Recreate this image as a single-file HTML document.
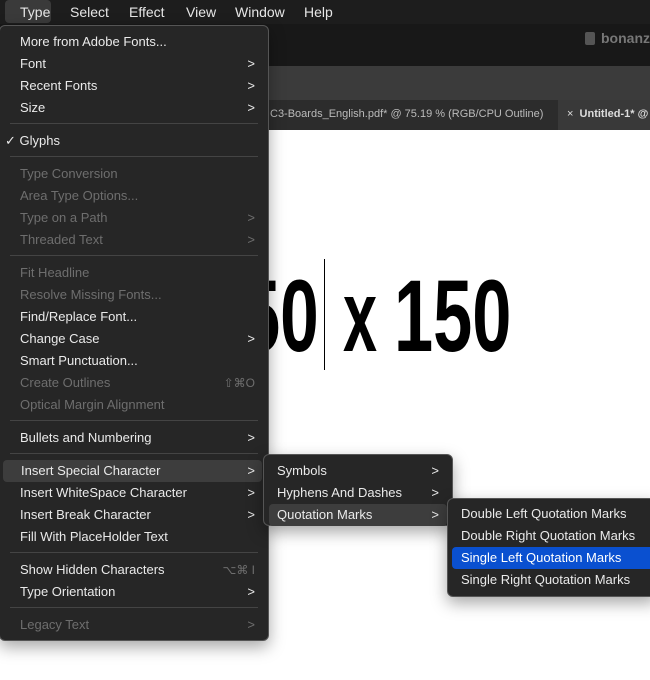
<!DOCTYPE html>
<html><head><style>
*{margin:0;padding:0;box-sizing:border-box}
body{width:650px;height:680px;overflow:hidden;background:#fff;font-family:"Liberation Sans",sans-serif;position:relative}
.abs{position:absolute}
.mb{left:0;top:0;width:650px;height:24px;background:#1d1d1d;color:#e6e6e6;font-size:14px}
.mb span{position:absolute;top:4px}
.menu{background:#262626;border:1px solid #555;border-radius:6px;box-shadow:0 6px 16px rgba(0,0,0,.35);color:#eaeaea;font-size:13px}
.it{position:absolute;left:0;right:0;height:22px;line-height:22px;padding-left:20px}
.dis{color:#6e6e6e}
.ar{position:absolute;right:13px;top:0;font-size:13px}
.sep{position:absolute;left:10px;right:10px;height:1px;background:#444}
.hl{background:#3d3d3d;border-radius:4px}
.big{position:absolute;top:265px;font-size:102px;line-height:1;font-weight:bold;color:#000;transform-origin:0 0;white-space:nowrap}
</style></head><body>
<div class="abs mb">
<div class="abs" style="left:5px;top:0;width:46px;height:23px;background:#3a3a3a;border-radius:4px"></div>
<span style="left:20px">Type</span><span style="left:70px">Select</span><span style="left:129px">Effect</span><span style="left:186px">View</span><span style="left:235px">Window</span><span style="left:304px">Help</span>
</div>
<div class="abs" style="left:0;top:24px;width:650px;height:42px;background:#181818"></div>
<div class="abs" style="left:585px;top:32px;width:10px;height:13px;background:#555;border-radius:2px"></div>
<div class="abs" style="left:601px;top:30px;color:#777;font-size:14px;font-weight:bold">bonanza</div>
<div class="abs" style="left:0;top:66px;width:650px;height:34px;background:#3b3b3b"></div>
<div class="abs" style="left:0;top:100px;width:650px;height:30px;background:#2c2c2c"></div>
<div class="abs" style="left:558px;top:100px;width:92px;height:30px;background:#393939"></div>
<div class="abs" style="left:270px;top:108px;color:#bbb;font-size:11px">C3-Boards_English.pdf* @ 75.19 % (RGB/CPU Outline)</div>
<div class="abs" style="left:567px;top:108px;color:#ddd;font-size:11px">×&nbsp;&nbsp;<b>Untitled-1* @</b></div>
<div class="abs" style="left:0;top:130px;width:650px;height:550px;background:#fff"></div>
<div class="big" style="left:203px;transform:scaleX(.68)">150</div>
<div class="big" style="left:343px;transform:scaleX(.6)">x</div>
<div class="big" style="left:394px;transform:scaleX(.69)">150</div>
<div class="abs" style="left:324px;top:259px;width:1px;height:111px;background:#000"></div>

<div class="abs menu" style="left:-1px;top:25px;width:270px;height:616px">
<div class="it" style="top:5px">More from Adobe Fonts...</div>
<div class="it" style="top:27px">Font<span class="ar">&gt;</span></div>
<div class="it" style="top:49px">Recent Fonts<span class="ar">&gt;</span></div>
<div class="it" style="top:71px">Size<span class="ar">&gt;</span></div>
<div class="sep" style="top:97px"></div>
<div class="it" style="top:104px;padding-left:5px">✓ Glyphs</div>
<div class="sep" style="top:130px"></div>
<div class="it dis" style="top:137px">Type Conversion</div>
<div class="it dis" style="top:159px">Area Type Options...</div>
<div class="it dis" style="top:181px">Type on a Path<span class="ar">&gt;</span></div>
<div class="it dis" style="top:203px">Threaded Text<span class="ar">&gt;</span></div>
<div class="sep" style="top:229px"></div>
<div class="it dis" style="top:236px">Fit Headline</div>
<div class="it dis" style="top:258px">Resolve Missing Fonts...</div>
<div class="it" style="top:280px">Find/Replace Font...</div>
<div class="it" style="top:302px">Change Case<span class="ar">&gt;</span></div>
<div class="it" style="top:324px">Smart Punctuation...</div>
<div class="it dis" style="top:346px">Create Outlines<span class="ar" style="font-size:12px">⇧⌘O</span></div>
<div class="it dis" style="top:368px">Optical Margin Alignment</div>
<div class="sep" style="top:394px"></div>
<div class="it" style="top:401px">Bullets and Numbering<span class="ar">&gt;</span></div>
<div class="sep" style="top:427px"></div>
<div class="it hl" style="top:434px;left:3px;right:6px;padding-left:18px">Insert Special Character<span class="ar" style="right:7px">&gt;</span></div>
<div class="it" style="top:456px">Insert WhiteSpace Character<span class="ar">&gt;</span></div>
<div class="it" style="top:478px">Insert Break Character<span class="ar">&gt;</span></div>
<div class="it" style="top:500px">Fill With PlaceHolder Text</div>
<div class="sep" style="top:526px"></div>
<div class="it" style="top:533px">Show Hidden Characters<span class="ar dis" style="font-size:12px">⌥⌘ I</span></div>
<div class="it" style="top:555px">Type Orientation<span class="ar">&gt;</span></div>
<div class="sep" style="top:581px"></div>
<div class="it dis" style="top:588px">Legacy Text<span class="ar">&gt;</span></div>
</div>

<div class="abs menu" style="left:263px;top:454px;width:190px;height:72px">
<div class="it" style="top:5px;padding-left:13px">Symbols<span class="ar">&gt;</span></div>
<div class="it" style="top:27px;padding-left:13px">Hyphens And Dashes<span class="ar">&gt;</span></div>
<div class="it hl" style="top:49px;left:5px;right:5px;padding-left:8px">Quotation Marks<span class="ar" style="right:8px">&gt;</span></div>
</div>

<div class="abs menu" style="left:447px;top:498px;width:210px;height:99px">
<div class="it" style="top:4px;padding-left:13px">Double Left Quotation Marks</div>
<div class="it" style="top:26px;padding-left:13px">Double Right Quotation Marks</div>
<div class="it" style="top:48px;left:4px;padding-left:9px;background:#0a50d0;border-radius:4px;color:#fff">Single Left Quotation Marks</div>
<div class="it" style="top:70px;padding-left:13px">Single Right Quotation Marks</div>
</div>
</body></html>
